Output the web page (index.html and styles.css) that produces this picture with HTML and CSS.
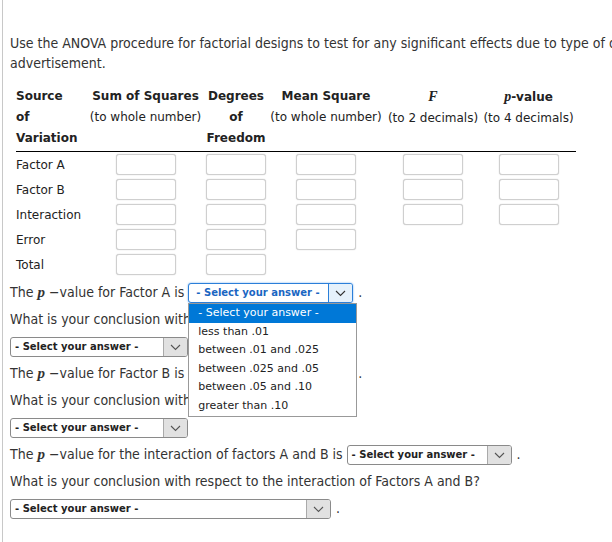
FILE: index.html
```html
<!DOCTYPE html>
<html lang="en">
<head>
    <meta charset="UTF-8">
    <title>ANOVA factorial designs</title>
    <link rel="stylesheet" href="styles.css">
</head>
<body>
    <div id="page">
        <!-- Question text -->
        <p class="intro">Use the ANOVA procedure for factorial designs to test for any significant effects due to type of design and size of advertisement.</p>

        <!-- ANOVA table -->
        <table class="anova">
            <colgroup>
                <col style="width:70px">
                <col style="width:119px">
                <col style="width:62px">
                <col style="width:118px">
                <col style="width:96px">
                <col style="width:95px">
            </colgroup>
            <thead>
                <tr>
                    <th class="left">Source<br>of<br>Variation</th>
                    <th>Sum of Squares<br><span class="note">(to whole number)</span><br>&nbsp;</th>
                    <th>Degrees<br>of<br>Freedom</th>
                    <th>Mean Square<br><span class="note">(to whole number)</span><br>&nbsp;</th>
                    <th><span class="math">F</span><br><span class="note">(to 2 decimals)</span><br>&nbsp;</th>
                    <th><span class="math">p</span>-value<br><span class="note">(to 4 decimals)</span><br>&nbsp;</th>
                </tr>
            </thead>
            <tbody>
                <tr>
                    <td class="left">Factor A</td>
                    <td><input type="text"></td>
                    <td><input type="text"></td>
                    <td><input type="text"></td>
                    <td><input type="text"></td>
                    <td><input type="text"></td>
                </tr>
                <tr>
                    <td class="left">Factor B</td>
                    <td><input type="text"></td>
                    <td><input type="text"></td>
                    <td><input type="text"></td>
                    <td><input type="text"></td>
                    <td><input type="text"></td>
                </tr>
                <tr>
                    <td class="left">Interaction</td>
                    <td><input type="text"></td>
                    <td><input type="text"></td>
                    <td><input type="text"></td>
                    <td><input type="text"></td>
                    <td><input type="text"></td>
                </tr>
                <tr>
                    <td class="left">Error</td>
                    <td><input type="text"></td>
                    <td><input type="text"></td>
                    <td><input type="text"></td>
                    <td></td>
                    <td></td>
                </tr>
                <tr>
                    <td class="left">Total</td>
                    <td><input type="text"></td>
                    <td><input type="text"></td>
                    <td></td>
                    <td></td>
                    <td></td>
                </tr>
            </tbody>
        </table>

        <!-- Questions -->
        <div class="questions">
            <div class="line">The <span class="math pv">p</span> −value for Factor A is <div class="dropdown"><div class="select focus w-short"><span class="value">- Select your answer -</span><span class="arrow"><svg width="11" height="7" viewBox="0 0 11 7"><path d="M1 1 L5.5 5.5 L10 1" fill="none" stroke="#333" stroke-width="1.1"/></svg></span></div><ul class="menu">
                        <li class="active">- Select your answer -</li>
                        <li>less than .01</li>
                        <li>between .01 and .025</li>
                        <li>between .025 and .05</li>
                        <li>between .05 and .10</li>
                        <li>greater than .10</li>
                    </ul></div><span class="dot">.</span></div>
            <div class="line">What is your conclusion with respect to Factor A?</div>
            <div class="line"><div class="select w-mid"><span class="value">- Select your answer -</span><span class="arrow"><svg width="11" height="7" viewBox="0 0 11 7"><path d="M1 1 L5.5 5.5 L10 1" fill="none" stroke="#555" stroke-width="1.1"/></svg></span></div></div>
            <div class="line">The <span class="math pv">p</span> −value for Factor B is <div class="select w-short"><span class="value">- Select your answer -</span><span class="arrow"><svg width="11" height="7" viewBox="0 0 11 7"><path d="M1 1 L5.5 5.5 L10 1" fill="none" stroke="#555" stroke-width="1.1"/></svg></span></div><span class="dot">.</span></div>
            <div class="line">What is your conclusion with respect to Factor B?</div>
            <div class="line"><div class="select w-mid"><span class="value">- Select your answer -</span><span class="arrow"><svg width="11" height="7" viewBox="0 0 11 7"><path d="M1 1 L5.5 5.5 L10 1" fill="none" stroke="#555" stroke-width="1.1"/></svg></span></div></div>
            <div class="line">The <span class="math pv">p</span> −value for the interaction of factors A and B is <div class="select w-short"><span class="value">- Select your answer -</span><span class="arrow"><svg width="11" height="7" viewBox="0 0 11 7"><path d="M1 1 L5.5 5.5 L10 1" fill="none" stroke="#555" stroke-width="1.1"/></svg></span></div><span class="dot">.</span></div>
            <div class="line">What is your conclusion with respect to the interaction of Factors A and B?</div>
            <div class="line"><div class="select w-long"><span class="value">- Select your answer -</span><span class="arrow"><svg width="11" height="7" viewBox="0 0 11 7"><path d="M1 1 L5.5 5.5 L10 1" fill="none" stroke="#555" stroke-width="1.1"/></svg></span></div><span class="dot">.</span></div>
        </div>
    </div>
</body>
</html>
```

FILE: styles.css
```css
/* Global Styles */
body {
    margin: 0;
    background-color: #ffffff;
    color: #333333;
    font-family: "DejaVu Sans Condensed", "DejaVu Sans", sans-serif;
    font-size: 14px;
    overflow: hidden;
}

#page {
    margin-left: 2px;
    border-left: 1px solid #c8c8c8;
    padding: 33px 0 40px 7px;
    min-height: 542px;
    box-sizing: border-box;
    width: 900px;
}

.intro {
    margin: 0 0 13px 0;
    line-height: 20px;
    width: 760px;
}

/* ANOVA table */
.anova {
    margin-left: 6px;
    width: 560px;
    table-layout: fixed;
    border-collapse: collapse;
    font-family: "DejaVu Sans", sans-serif;
    font-size: 12px;
    color: #222;
}

.anova th {
    font-weight: bold;
    line-height: 21px;
    padding: 0 0 1px 0;
    text-align: center;
    vertical-align: top;
    border-bottom: 1px solid #000;
    white-space: nowrap;
}

.anova th.left,
.anova td.left {
    text-align: left;
}

.anova .note {
    font-weight: normal;
}

.anova td {
    height: 25px;
    padding: 0;
    text-align: center;
}

.anova input {
    width: 60px;
    height: 21px;
    box-sizing: border-box;
    border: 1px solid #cfcfcf;
    border-radius: 3px;
    box-shadow: 0 0 1px #bbb;
    background: #fff;
    margin: 0;
    vertical-align: middle;
}

.math {
    font-family: "Liberation Serif", serif;
    font-style: italic;
    font-weight: bold;
    font-size: 14px;
}

.pv {
    font-size: 15px;
}

/* Question lines */
.questions {
    margin-top: 2px;
}

.line {
    height: 27px;
    line-height: 27px;
    white-space: nowrap;
}

.dot {
    margin-left: 5px;
}

.dropdown {
    position: relative;
    display: inline-block;
    vertical-align: middle;
}

.select {
    height: 20px;
    box-sizing: border-box;
    border: 1px solid #8a8a8a;
    border-radius: 3px;
    display: inline-flex;
    vertical-align: middle;
    align-items: stretch;
    background: #fff;
    font-family: "DejaVu Sans", sans-serif;
    font-size: 10px;
    font-weight: bold;
    line-height: 18px;
    color: #222;
    overflow: hidden;
}

.select .value {
    flex: 1;
    padding-left: 4px;
}

.select .arrow {
    width: 23px;
    border-left: 1px solid #aaa;
    background: #e1e1e1;
    display: flex;
    align-items: center;
    justify-content: center;
}

.select.focus {
    display: flex;
    border: 1px solid #2b7fd9;
    box-shadow: 0 0 2px #6aa8ea;
    color: #1a66c2;
}

.select.focus .value {
    padding-left: 7px;
}

.select.focus .arrow {
    background: #e5f1fb;
    border-left: 1px solid #2b7fd9;
}

.w-short {
    width: 165px;
}

.w-mid {
    width: 178px;
}

.w-long {
    width: 321px;
}

/* Open menu */
.menu {
    position: absolute;
    top: 20px;
    left: 0;
    width: 169px;
    margin: 0;
    padding: 0;
    list-style: none;
    border: 1px solid #999;
    background: #fff;
    box-sizing: border-box;
    font-family: "DejaVu Sans", sans-serif;
    font-size: 11px;
    line-height: 18.6px;
    color: #222;
    z-index: 5;
}

.menu li {
    height: 18.6px;
    padding-left: 9px;
}

.menu li.active {
    background: #0078d7;
    color: #ffffff;
}
```
